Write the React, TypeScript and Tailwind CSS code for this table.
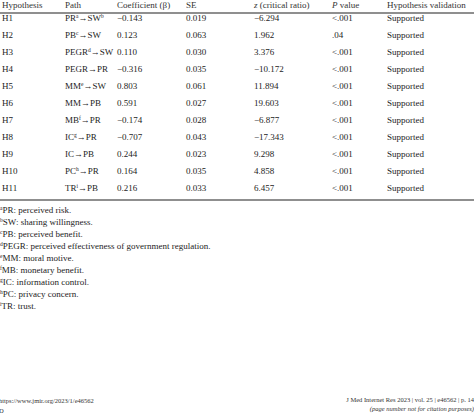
import React from "react";

type Row = {
    id: string;
    from: string;
    fromSup?: string;
    to: string;
    toSup?: string;
    coef: string;
    se: string;
    z: string;
    p: string;
};

const rows: Row[] = [
    { id: "H1", from: "PR", fromSup: "a", to: "SW", toSup: "b", coef: "−0.143", se: "0.019", z: "−6.294", p: "<.001" },
    { id: "H2", from: "PB", fromSup: "c", to: "SW", coef: "0.123", se: "0.063", z: "1.962", p: ".04" },
    { id: "H3", from: "PEGR", fromSup: "d", to: "SW", coef: "0.110", se: "0.030", z: "3.376", p: "<.001" },
    { id: "H4", from: "PEGR", to: "PR", coef: "−0.316", se: "0.035", z: "−10.172", p: "<.001" },
    { id: "H5", from: "MM", fromSup: "e", to: "SW", coef: "0.803", se: "0.061", z: "11.894", p: "<.001" },
    { id: "H6", from: "MM", to: "PB", coef: "0.591", se: "0.027", z: "19.603", p: "<.001" },
    { id: "H7", from: "MB", fromSup: "f", to: "PR", coef: "−0.174", se: "0.028", z: "−6.877", p: "<.001" },
    { id: "H8", from: "IC", fromSup: "g", to: "PR", coef: "−0.707", se: "0.043", z: "−17.343", p: "<.001" },
    { id: "H9", from: "IC", to: "PB", coef: "0.244", se: "0.023", z: "9.298", p: "<.001" },
    { id: "H10", from: "PC", fromSup: "h", to: "PR", coef: "0.164", se: "0.035", z: "4.858", p: "<.001" },
    { id: "H11", from: "TR", fromSup: "i", to: "PB", coef: "0.216", se: "0.033", z: "6.457", p: "<.001" },
];

const notes: [string, string][] = [
    ["a", "PR: perceived risk."],
    ["b", "SW: sharing willingness."],
    ["c", "PB: perceived benefit."],
    ["d", "PEGR: perceived effectiveness of government regulation."],
    ["e", "MM: moral motive."],
    ["f", "MB: monetary benefit."],
    ["g", "IC: information control."],
    ["h", "PC: privacy concern."],
    ["i", "TR: trust."],
];

// column starts: 2, 65, 117, 186, 254, 332, 387
const cols = "grid grid-cols-[63px_52px_69px_68px_78px_55px_1fr] pl-[2px]";

const Sup = ({ children }: { children: React.ReactNode }) => (
    <sup className="text-[5.5px] top-[-0.6em]">{children}</sup>
);

export default function App() {
    return (
        <div className="w-[474px] h-[413px] overflow-hidden bg-white text-[#1c1c1c] font-['Liberation_Serif','Times_New_Roman',serif]">
            {/* header */}
            <div className={`${cols} h-[12px] text-[9px] leading-[10px] text-[#333]`}>
                <span>Hypothesis</span>
                <span>Path</span>
                <span>Coefficient (β)</span>
                <span>SE</span>
                <span>
                    <i>z</i> (critical ratio)
                </span>
                <span>
                    <i>P</i> value
                </span>
                <span>Hypothesis validation</span>
            </div>
            <div className="h-[2px] bg-[#8f8f8f]" />

            {/* body */}
            <div className="flex flex-col text-[9px] leading-[9px]">
                {rows.map((r, i) => (
                    <div
                        key={r.id}
                        className={`${cols} ${i === rows.length - 1 ? "h-[15px]" : "h-[17px]"} pt-[0px]`}
                    >
                        <span>{r.id}</span>
                        <span className="whitespace-nowrap">
                            {r.from}
                            {r.fromSup && <Sup>{r.fromSup}</Sup>}
                            →{r.to}
                            {r.toSup && <Sup>{r.toSup}</Sup>}
                        </span>
                        <span>{r.coef}</span>
                        <span>{r.se}</span>
                        <span>{r.z}</span>
                        <span>{r.p}</span>
                        <span>Supported</span>
                    </div>
                ))}
            </div>
            <div className="h-[2px] bg-[#8f8f8f]" />

            {/* footnotes */}
            <div className="mt-[3px] flex flex-col text-[9px] leading-[12px]">
                {notes.map(([k, t]) => (
                    <p key={k}>
                        <Sup>{k}</Sup>
                        {t}
                    </p>
                ))}
            </div>

            {/* page footer */}
            <div className="mt-[84px] flex justify-between text-[6.5px] text-[#333]">
                <div className="flex flex-col leading-[10px] -ml-[1px]">
                    <span>https://www.jmir.org/2023/1/e46562</span>
                    <span>D</span>
                </div>
                <div className="flex flex-col items-end leading-[8.5px]">
                    <span>J Med Internet Res 2023 | vol. 25 | e46562 | p. 14</span>
                    <span className="italic">(page number not for citation purposes)</span>
                </div>
            </div>
        </div>
    );
}
